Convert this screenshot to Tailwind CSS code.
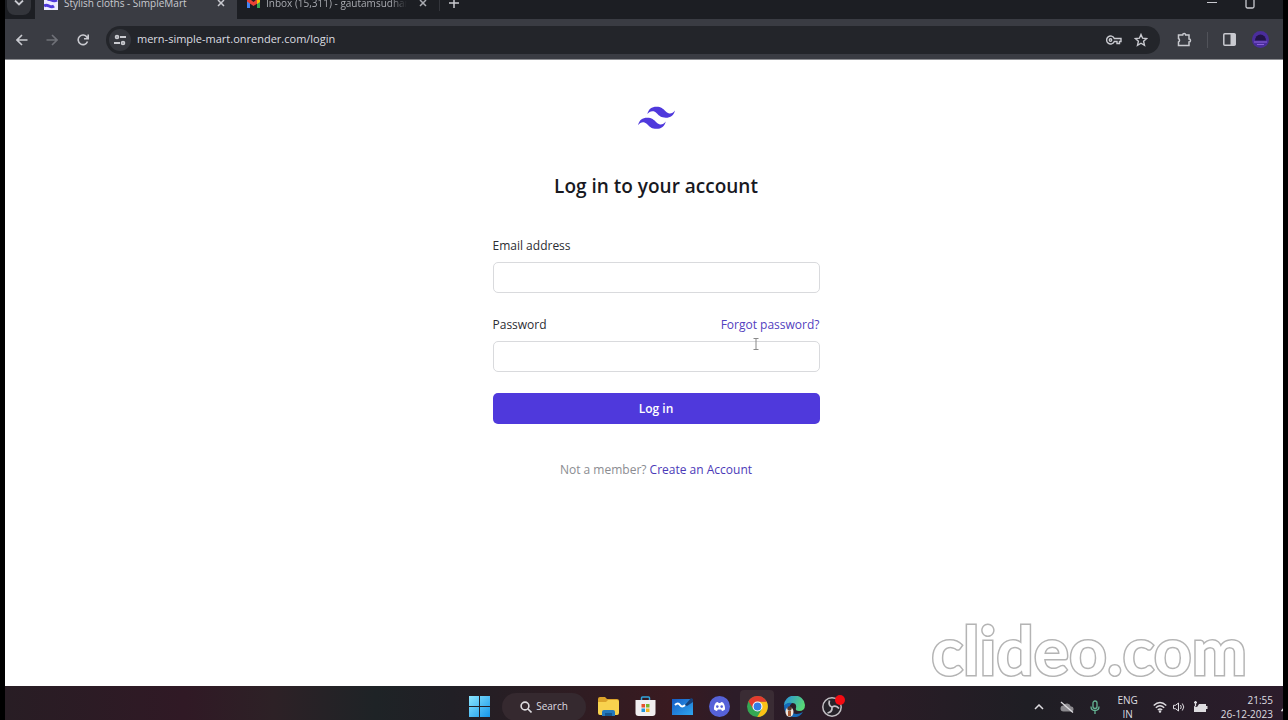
<!DOCTYPE html>
<html lang="en">
<head>
    <meta charset="UTF-8">
    <meta name="viewport" content="width=device-width, initial-scale=1.0">
    <title>Stylish cloths - SimpleMart</title>
    <script src="https://cdn.jsdelivr.net/npm/@tailwindcss/browser@4"></script>
    <style>
        body {
            font-family: 'Open Sans', 'Noto Sans', sans-serif;
        }
        .watermark {
            font-family: Lato, sans-serif;
            color: #fff;
            -webkit-text-stroke: 3px #b4b4b4;
            paint-order: stroke fill;
        }
        .taskbar {
            background: linear-gradient(90deg, #281d24 0%, #301925 14%, #2d2126 21%, #1e2326 29%, #211f25 35%, #391a20 52%, #2c1c28 57%, #2a1c26 68%, #1f1e24 80%, #2c1c2b 100%);
        }
    </style>
</head>
<body class="flex h-screen flex-col overflow-hidden bg-black px-[5px]">
    <!-- Tab strip -->
    <header class="flex h-[19px] shrink-0 items-end overflow-hidden bg-[#1c1e23] text-[10px] text-[#c9cad0]">
        <div class="flex h-8 w-full shrink-0 items-center">
            <button aria-label="Search tabs" class="ml-[2px] flex h-6 w-6 items-center justify-center rounded-lg bg-[#33353b]">
                <svg class="h-3 w-3" viewBox="0 0 12 12" fill="none" stroke="currentColor" stroke-width="1.8"><path d="M2 3.500l4 4 4-4"/></svg>
            </button>
            <div class="ml-1 flex h-8 w-[202px] items-center rounded-t-lg bg-[#3a3c43] pr-3 pl-[9px]">
                <svg class="h-[14px] w-[14px] bg-[#eceaff]" viewBox="0 0 14 14" fill="none" stroke="#4f39dc" stroke-width="3"><path d="M3 4c3-3 5 3 10 0M0 10c4-3 6 3 10 0"/></svg>
                <span class="ml-[6px] grow whitespace-nowrap">Stylish cloths - SimpleMart</span>
                <button aria-label="Close tab"><svg class="h-2 w-2" viewBox="0 0 8 8" stroke="currentColor" stroke-width="1.500"><path d="M1 1l6 6M7 1l-6 6"/></svg></button>
            </div>
            <div class="flex h-8 w-[196px] items-center pr-[6px] pl-[10px] text-[#a9abb1]">
                <svg class="h-[10px] w-[13px] shrink-0" viewBox="0 0 13 10"><path fill="#4285f4" d="M0 1h3v9H0z"/><path fill="#34a853" d="M10 1h3v9h-3z"/><path fill="#ea4335" d="M0 1.500L1.500 0 6.500 4 11.500 0 13 1.500v2L6.500 8 0 3.500z"/><path fill="#fbbc04" d="M10 2l2-2 1 1v3l-3 2z"/></svg>
                <span class="ml-[6px] w-[141px] shrink-0 overflow-hidden whitespace-nowrap [mask-image:linear-gradient(90deg,#000_88%,transparent)]">Inbox (15,311) - gautamsudhan</span>
                <button aria-label="Close tab" class="ml-auto"><svg class="h-2 w-2" viewBox="0 0 8 8" stroke="currentColor" stroke-width="1.500"><path d="M1 1l6 6M7 1l-6 6"/></svg></button>
            </div>
            <span class="ml-[6px] h-4 w-px bg-[#33353b]"></span>
            <button aria-label="New tab" class="ml-[9px]"><svg class="h-[10px] w-[10px]" viewBox="0 0 10 10" stroke="currentColor" stroke-width="1.500"><path d="M5 0v10M0 5h10"/></svg></button>
            <button aria-label="Minimize" class="ml-auto"><svg class="h-[10px] w-[10px]" viewBox="0 0 10 10" stroke="currentColor"><path d="M0 4.500h10"/></svg></button>
            <button aria-label="Restore" class="mr-7 ml-7"><svg class="h-[11px] w-[10px]" viewBox="0 0 10 11" fill="none" stroke="currentColor" stroke-width="1.300"><rect x="1" y="1" width="8" height="9" rx="1.500"/></svg></button>
        </div>
    </header>

    <!-- Toolbar -->
    <nav class="flex h-10 shrink-0 items-center bg-[#3a3c43] pt-px text-[#c9cad0]">
        <button aria-label="Back" class="ml-[11px]"><svg class="h-3 w-3" viewBox="0 0 12 12" fill="none" stroke="currentColor" stroke-width="1.600"><path d="M11.500 6H1.500M6 1L1 6l5 5"/></svg></button>
        <button aria-label="Forward" class="ml-[18px] text-[#6f7178]"><svg class="h-3 w-3" viewBox="0 0 12 12" fill="none" stroke="currentColor" stroke-width="1.600"><path d="M.5 6h10M6 1l5 5-5 5"/></svg></button>
        <button aria-label="Reload" class="ml-[19px]"><svg class="h-3 w-3" viewBox="0 0 12 12" fill="none" stroke="currentColor" stroke-width="1.600"><path d="M10.500 7.500A4.800 4.800 0 1 1 10 3.200L11 4.500M11.200.5v4.200H7"/></svg></button>
        <div class="ml-[17px] flex h-7 grow items-center rounded-full bg-[#23252a] pr-3 pl-[3px]">
            <button aria-label="Site information" class="flex h-[22px] w-[22px] items-center justify-center rounded-full bg-[#35373e]">
                <svg class="h-3 w-3" viewBox="0 0 12 12" fill="none" stroke="currentColor" stroke-width="1.800"><circle cx="3" cy="3" r="1.400"/><path d="M6 3h6M0 9h6"/><circle cx="9" cy="9" r="1.400"/></svg>
            </button>
            <input type="text" aria-label="Address" value="mern-simple-mart.onrender.com/login" class="ml-[6px] min-w-0 grow bg-transparent text-[11px] text-[#dcdde1] outline-none">
            <button aria-label="Passwords"><svg class="h-[10px] w-4" viewBox="0 0 16 10" fill="none" stroke="currentColor" stroke-width="1.400"><path d="M8.300 3.500H15v3h-1.500v2h-2.500v-2H8.300A4 4 0 1 1 8.300 3.500z"/><circle cx="4.500" cy="5" r="1.200"/></svg></button>
            <button aria-label="Bookmark" class="ml-3"><svg class="h-[14px] w-[14px]" viewBox="0 0 14 14" fill="none" stroke="currentColor" stroke-width="1.400"><path d="M7 1.500l1.600 3.700 4 .4-3 2.700.9 4L7 10.200l-3.500 2.100.9-4-3-2.700 4-.4z"/></svg></button>
        </div>
        <button aria-label="Extensions" class="ml-[17px]"><svg class="h-[15px] w-[15px]" viewBox="0 0 15 15" fill="none" stroke="currentColor" stroke-width="1.500"><path d="M1.500 3h4.200a1.500 1.500 0 0 1 3 0h3.300v4a1.500 1.500 0 0 1 0 3v3.500H1.500v-3.500a2 2 0 0 0 0-3.500z"/></svg></button>
        <span class="ml-[15px] h-4 w-px bg-[#51535a]"></span>
        <button aria-label="Side panel" class="ml-[15px]"><svg class="h-[13px] w-[13px]" viewBox="0 0 13 13"><rect x=".8" y=".8" width="11.400" height="11.400" rx="1" fill="none" stroke="currentColor" stroke-width="1.500"/><path d="M7.500 1h5v11h-5z" fill="currentColor"/></svg></button>
        <button aria-label="Profile" class="mr-[14px] ml-4"><svg class="h-[17px] w-[17px]" viewBox="0 0 17 17"><circle cx="8.500" cy="8.500" r="8.500" fill="#4a2d9c"/><path d="M3 9.500a5.500 6 0 0 1 11 0z" fill="#221447"/><path d="M2 11h13M5 13.500h7" stroke="#8a63d8"/></svg></button>
    </nav>

    <main class="relative min-h-0 grow overflow-hidden border-t border-[#8d8e92] bg-white">
        <div class="flex w-[calc(100%+24px)] flex-col items-center pt-10">
            <svg class="h-9 w-[37px]" viewBox="0 0 51 31" fill="#4f39dc"><path d="M25.517 0C18.712 0 14.460 3.382 12.758 10.146c2.552-3.382 5.529-4.650 8.931-3.805 1.941.482 3.329 1.882 4.864 3.432 2.502 2.524 5.398 5.445 11.722 5.445 6.804 0 11.057-3.382 12.758-10.145-2.551 3.382-5.528 4.650-8.930 3.804-1.942-.482-3.330-1.882-4.865-3.431C34.736 2.920 31.841 0 25.517 0zM12.758 15.218C5.954 15.218 1.701 18.600 0 25.364c2.552-3.382 5.529-4.650 8.930-3.805 1.942.482 3.330 1.882 4.865 3.432 2.502 2.524 5.397 5.445 11.722 5.445 6.804 0 11.057-3.381 12.758-10.145-2.552 3.382-5.529 4.650-8.931 3.805-1.941-.483-3.329-1.883-4.864-3.432-2.502-2.524-5.398-5.446-11.722-5.446z"/></svg>
            <h1 class="mt-9 text-[19px] leading-7 font-semibold text-[#18191f]">Log in to your account</h1>

            <form class="mt-9 w-full max-w-[327px] text-[12px] leading-5">
                <label for="email" class="block text-[#2c2d33]">Email address</label>
                <input id="email" type="email" class="mt-[6px] block h-[31px] w-full rounded-[5px] border border-[#d9dadd] px-2">
                <div class="mt-[22px] flex items-center justify-between">
                    <label for="password" class="text-[#2c2d33]">Password</label>
                    <a href="#" class="font-medium text-[#5341c0]">Forgot password?</a>
                </div>
                <input id="password" type="password" class="mt-[6px] block h-[31px] w-full rounded-[5px] border border-[#d9dadd] px-2">
                <button type="submit" class="mt-[21px] block h-[31px] w-full rounded-[5px] bg-[#4f39dc] font-semibold text-white">Log in</button>
            </form>
            <p class="mt-9 text-[12px] leading-5 text-[#8b8c91]">Not a member? <a href="#" class="font-medium text-[#4b3ab8]">Create an Account</a></p>
        </div>

        <!-- Text cursor -->
        <svg class="absolute top-[278px] left-[748px] h-3 w-[6px]" viewBox="0 0 6 12" fill="none" stroke="#8a8a8a"><path d="M.5.5h5M3 .5v11M.5 11.500h5"/></svg>
        <div class="watermark absolute right-9 bottom-0 text-[66px] leading-[72px] font-bold">clideo.com</div>
    </main>

    <!-- Taskbar -->
    <footer class="taskbar h-[34px] shrink-0 overflow-hidden text-[#dedce0]">
        <div class="grid h-[41px] w-[calc(100%+24px)] grid-cols-[1fr_auto_1fr] items-center">
            <span></span>
            <div class="flex items-center gap-4 pl-[2px]">
                <button aria-label="Start"><svg class="h-[21px] w-[21px]" viewBox="0 0 21 21"><defs><linearGradient id="win" x2="1" y2="1"><stop stop-color="#8be6ff"/><stop offset="1" stop-color="#1596e8"/></linearGradient></defs><path fill="url(#win)" d="M0 0h10v10H0zM11 0h10v10H11zM0 11h10v10H0zM11 11h10v10H11z"/></svg></button>
                <button class="-mx-1 flex h-7 w-[84px] items-center justify-center gap-1 rounded-full bg-[#35292f] text-[10px] font-medium">
                    <svg class="h-3 w-3" viewBox="0 0 12 12" fill="none" stroke="currentColor" stroke-width="1.600"><circle cx="5" cy="5" r="3.900"/><path d="M8 8l3.500 3.500"/></svg>
                    Search
                </button>
                <button aria-label="File Explorer"><svg class="h-[21px] w-[21px]" viewBox="0 0 21 21"><path fill="#dca32a" d="M0 3q0-2 2-2h5l2 2h10q2 0 2 2v3H0z"/><path fill="#f8d24e" d="M0 6h8l2-2h9q2 0 2 2v11q0 2-2 2H2q-2 0-2-2z"/><path fill="#2378bd" d="M4 20v-4q0-2 2-2h9q2 0 2 2v4z"/><path fill="#14568f" d="M7 17h7v3H7z"/></svg></button>
                <button aria-label="Microsoft Store"><svg class="h-[21px] w-[21px]" viewBox="0 0 20 21"><path fill="none" stroke="#32a6dc" stroke-width="1.500" d="M6 5V2q0-1 1-1h6q1 0 1 1v3"/><path fill="#f1eff0" d="M0 4h20v13q0 3-3 3H3q-3 0-3-3z"/><path fill="#e5532d" d="M6 8h3.500v3.500H6z"/><path fill="#79b52b" d="M10.500 8H14v3.500h-3.500z"/><path fill="#2296d9" d="M6 12.500h3.500V16H6z"/><path fill="#f2b51f" d="M10.500 12.500H14V16h-3.500z"/></svg></button>
                <button aria-label="Whiteboard"><svg class="h-[21px] w-[21px]" viewBox="0 0 21 21"><defs><linearGradient id="board" x2="1" y2="1"><stop stop-color="#155bc4"/><stop offset="1" stop-color="#2fa6ee"/></linearGradient></defs><path d="M0 3h21v16H0z" fill="url(#board)"/><path d="M3 9q3-3 5 0t5 0" fill="none" stroke="#fff" stroke-width="2"/><path d="M13 9l6-7 2 1v3l-6 4z" fill="#174078"/></svg></button>
                <button aria-label="Discord"><svg class="h-[21px] w-[21px]" viewBox="0 0 21 21"><circle cx="10.500" cy="10.500" r="10.500" fill="#5662d8"/><path fill="#fff" d="M7 6.500l2-.5.6 1h1.800l.6-1 2 .5c1.500 2 2.300 4.500 2 7-1 .8-2 1.200-3 1.500l-.8-1.500H8.800L8 15c-1-.3-2-.7-3-1.500-.3-2.500.5-5 2-7z"/><circle cx="8.300" cy="10.600" r="1.300" fill="#5662d8"/><circle cx="12.700" cy="10.600" r="1.300" fill="#5662d8"/></svg></button>
                <button aria-label="Chrome" class="-mx-[6px] flex h-[33px] w-[34px] items-center justify-center rounded-sm bg-[#3a2c34]"><svg class="h-[21px] w-[21px]" viewBox="0 0 21 21"><circle cx="10.500" cy="10.500" r="10.500" fill="#34a853"/><path fill="#fbc116" d="M10.500 10.500V5.500h9.100A10.500 10.500 0 0 1 10.300 21l4.500-8z"/><path fill="#e33b2e" d="M1.400 5.250A10.500 10.500 0 0 1 19.600 5.250L19.800 5.700H10.500L6.200 13z"/><circle cx="10.500" cy="10.500" r="5" fill="#fff"/><circle cx="10.500" cy="10.500" r="3.900" fill="#347ce5"/></svg></button>
                <button aria-label="Edge"><svg class="h-[21px] w-[21px]" viewBox="0 0 21 21"><defs><linearGradient id="edge" x2="1" y2=".4"><stop stop-color="#268ce0"/><stop offset="1" stop-color="#57d777"/></linearGradient></defs><path fill="url(#edge)" d="M0 10A10.500 10 0 0 1 21 9q0 6-6 6-4 0-3-3 1-5-4-5Q3 7 0 10z"/><path fill="#1468b8" d="M0 10q3-4 8-3-5 4-1 9 5 4 12 0-4 6-10 5Q0 19 0 10z"/><ellipse cx="5.500" cy="16" rx="4" ry="4.800" fill="#efe6dd"/><circle cx="5.500" cy="12.500" r="2.200" fill="#57382b"/><path fill="#a55832" d="M4 15h3v5H4z"/></svg></button>
                <button aria-label="OBS Studio"><svg class="h-6 w-6" viewBox="0 0 24 24"><circle cx="11" cy="12" r="9.200" fill="#252329" stroke="#c2c0c4" stroke-width="1.500"/><g fill="none" stroke="#c2c0c4" stroke-width="1.700"><path d="M11 12q-4-1.500-2.500-6.500"/><path d="M11 12q4-2.500 7 1.500"/><path d="M11 12q.5 5-4.500 6"/></g><circle cx="19" cy="5" r="5" fill="#f30b12"/></svg></button>
            </div>
            <div class="flex items-center justify-end text-[10px] leading-[14px] font-medium">
                <svg class="h-[6px] w-[10px]" viewBox="0 0 10 6" fill="none" stroke="currentColor" stroke-width="1.500"><path d="M1 5l4-4 4 4"/></svg>
                <svg class="ml-4 h-3 w-[14px]" viewBox="0 0 14 12"><path fill="#8b898e" d="M3.500 10.500a3 3 0 0 1 0-6 4 4 0 0 1 7.300 1 2.500 2.500 0 0 1 .5 5z"/><path d="M1 1l12 10.500" stroke="#dedce0" stroke-width="1.300"/></svg>
                <svg class="ml-4 h-[14px] w-[10px]" viewBox="0 0 10 14" fill="none" stroke="#65b494" stroke-width="1.300"><rect x="3" y="1" width="4" height="7.500" rx="2"/><path d="M1 6.500q0 4 4 4t4-4M5 10.500V14"/></svg>
                <div class="ml-[17px] text-center">ENG<br>IN</div>
                <svg class="ml-[15px] h-3 w-[14px]" viewBox="0 0 14 12" fill="none" stroke="currentColor" stroke-width="1.400"><path d="M.7 4.500q6.300-6 12.600 0M2.800 6.800q4.200-4 8.400 0M4.800 9q2.200-2 4.400 0"/><circle cx="7" cy="10.500" r=".6"/></svg>
                <svg class="ml-[6px] h-3 w-3" viewBox="0 0 12 12" fill="none" stroke="currentColor"><path d="M.5 4.300h2L5.500 2v8L2.500 7.700h-2zM7.500 4q1.500 2 0 4M9.300 2.500q3 3.500 0 7"/></svg>
                <svg class="ml-2 h-3 w-[15px]" viewBox="0 0 15 12"><path fill="currentColor" d="M1 5l3 1 2-3h7v2h1.500v3H13v3H1z"/><path d="M1 1.500h3M2.500 0v5" stroke="currentColor" stroke-width="1.300"/></svg>
                <div class="ml-[13px] text-right whitespace-nowrap">21:55<br>26-12-2023</div>
                <svg class="mr-[14px] ml-2 h-[14px] w-3" viewBox="0 0 12 14" fill="none" stroke="currentColor" stroke-width="1.300"><path d="M1 10.500L3 8V4.500a3 3 0 0 1 6 0V8l2 2.500z"/></svg>
            </div>
        </div>
    </footer>
</body>
</html>
